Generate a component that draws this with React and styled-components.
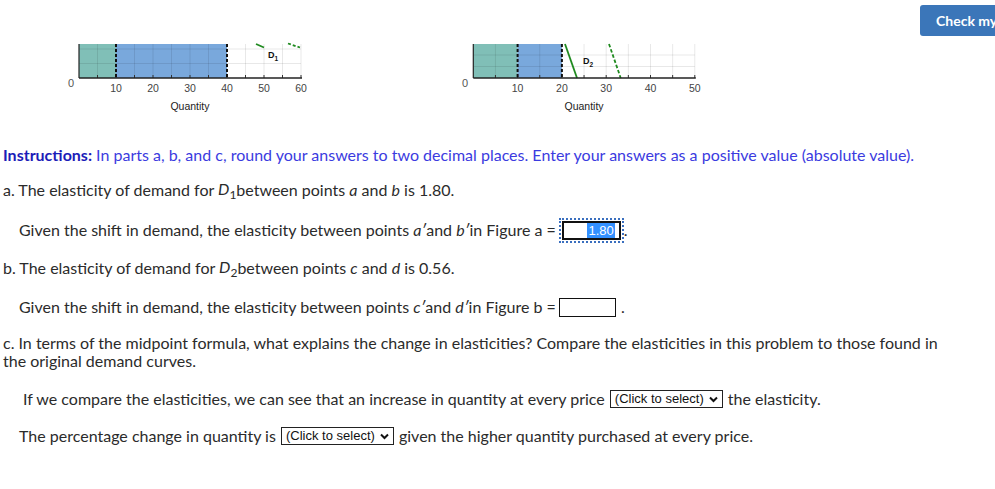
import styled, { createGlobalStyle } from "styled-components"

const GlobalStyle = createGlobalStyle`
    html, body {
        margin: 0;
        padding: 0;
        background: #ffffff;
        overflow: hidden;
    }
    body {
        font-family: Lato, "Liberation Sans", sans-serif;
        color: #2b2b2b;
    }
`

const chart1 = { x0: 19, unit: 3.7, max: 60, step: 10, hLines: [9, 23.5] }
const chart2 = { x0: 23.3, unit: 4.43, max: 50, step: 10, hLines: [15, 26.5] }

function Chart({ cfg, width, children, zeroX }) {
    const xs = []
    for (let q = 5; q <= cfg.max; q += 5) xs.push(q)
    const px = (q) => cfg.x0 + cfg.unit * q
    const end = px(cfg.max)

    return (
        <svg width={width} height="76" viewBox={`0 0 ${width} 76`}>
            <rect x={cfg.x0} y="4" width={end - cfg.x0} height="34" fill="#ffffff" />
            <rect x={px(0)} y="4" width={px(10) - px(0)} height="34" fill="#80bfb7" />
            <rect x={px(10)} y="4" width={px(cfg.max === 60 ? 40 : 20) - px(10)} height="34" fill="#79a8dc" />
            {xs.map((q) => (
                <line key={q} x1={px(q)} x2={px(q)} y1="4" y2="38" stroke="#000" strokeOpacity="0.09" strokeWidth="1" />
            ))}
            {cfg.hLines.map((y) => (
                <line key={y} x1={cfg.x0} x2={end} y1={y} y2={y} stroke="#000" strokeOpacity="0.09" strokeWidth="1" />
            ))}
            {xs.map((q) => (
                <line key={"t" + q} x1={px(q)} x2={px(q)} y1="35" y2="38" stroke="#333" strokeWidth="1" />
            ))}
            <line x1={cfg.x0} x2={cfg.x0} y1="4" y2="38" stroke="#222" strokeWidth="1.2" />
            {children(px)}
            <line x1={cfg.x0} x2={end + 1} y1="38" y2="38" stroke="#222" strokeWidth="1.5" />
            <text x={zeroX} y="47" fontSize="11" fill="#555" fontFamily="Liberation Sans, Arial, sans-serif">0</text>
            {xs.filter((q) => q % cfg.step === 0).map((q) => (
                <text key={"l" + q} x={px(q)} y="52" fontSize="10.5" fill="#444" textAnchor="middle" fontFamily="Liberation Sans, Arial, sans-serif">{q}</text>
            ))}
            <text x={(cfg.x0 + end) / 2} y="70" fontSize="10.5" fill="#222" textAnchor="middle" fontFamily="Liberation Sans, Arial, sans-serif">Quantity</text>
        </svg>
    )
}

function ChevronDown() {
    return (
        <svg width="9" height="7" viewBox="0 0 9 7">
            <path d="M1 1.5 L4.5 5 L8 1.5" fill="none" stroke="#111" strokeWidth="2" />
        </svg>
    )
}

function Dropdown() {
    return (
        <SelectBox>
            <span>(Click to select)</span>
            <ChevronDown />
        </SelectBox>
    )
}

function Sub({ letter, n }) {
    return (
        <Var>
            {letter}
            <Small>{n}</Small>
        </Var>
    )
}

export default function App() {
    return (
        <Page>
            <GlobalStyle />
            <TopBar>
                <CheckButton type="button">Check my work</CheckButton>
            </TopBar>

            <Figures>
                <Chart cfg={chart1} width={260} zeroX={8}>
                    {(px) => (
                        <>
                            <line x1={px(10)} x2={px(10)} y1="4" y2="38" stroke="#111" strokeWidth="2" strokeDasharray="3 2" />
                            <line x1={px(40)} x2={px(40)} y1="4" y2="38" stroke="#111" strokeWidth="2" strokeDasharray="3 2" />
                            <line x1="196" y1="4" x2="204" y2="7.5" stroke="#1f8a1f" strokeWidth="1.8" />
                            <line x1="228" y1="3.5" x2="240" y2="7.5" stroke="#1f8a1f" strokeWidth="1.8" strokeDasharray="3 2" />
                            <text x="208" y="18" fontSize="9" fontWeight="bold" fill="#111" fontFamily="Liberation Sans, Arial, sans-serif">D</text>
                            <text x="214.5" y="21" fontSize="6.5" fontWeight="bold" fill="#111" fontFamily="Liberation Sans, Arial, sans-serif">1</text>
                        </>
                    )}
                </Chart>
                <Chart cfg={chart2} width={270} zeroX={12}>
                    {(px) => (
                        <>
                            <line x1={px(10)} x2={px(10)} y1="4" y2="38" stroke="#111" strokeWidth="2" strokeDasharray="3 2" />
                            <line x1={px(20)} x2={px(20)} y1="4" y2="38" stroke="#111" strokeWidth="2" strokeDasharray="3 2" />
                            <line x1="115" y1="4" x2="127" y2="38" stroke="#1f8a1f" strokeWidth="1.8" />
                            <line x1="159" y1="4" x2="170.7" y2="38" stroke="#1f8a1f" strokeWidth="1.8" strokeDasharray="3.5 2" />
                            <text x="133" y="24" fontSize="9" fontWeight="bold" fill="#111" fontFamily="Liberation Sans, Arial, sans-serif">D</text>
                            <text x="139.5" y="27" fontSize="6.5" fontWeight="bold" fill="#111" fontFamily="Liberation Sans, Arial, sans-serif">2</text>
                        </>
                    )}
                </Chart>
            </Figures>

            <Questions>
                <Instructions>
                    <strong>Instructions:</strong> In parts a, b, and c, round your answers to two decimal places. Enter your answers as a positive value (absolute value).
                </Instructions>

                <Line gap={15}>
                    a. The elasticity of demand for <Sub letter="D" n="1" />between points <Var>a</Var> and <Var>b</Var> is 1.80.
                </Line>

                <Line gap={20} indent={16}>
                    Given the shift in demand, the elasticity between points <Var>a′</Var>and <Var>b′</Var>in Figure a =
                    <Focus>
                        <AnswerBox thick>
                            <Selected>1.80</Selected>
                        </AnswerBox>
                    </Focus>
                    .
                </Line>

                <Line gap={18}>
                    b. The elasticity of demand for <Sub letter="D" n="2" />between points <Var>c</Var> and <Var>d</Var> is 0.56.
                </Line>

                <Line gap={19} indent={16}>
                    Given the shift in demand, the elasticity between points <Var>c′</Var>and <Var>d′</Var>in Figure b =
                    <AnswerBox />
                    <Dot>.</Dot>
                </Line>

                <Wrapped gap={17}>
                    c. In terms of the midpoint formula, what explains the change in elasticities? Compare the elasticities in this problem to those found in the original demand curves.
                </Wrapped>

                <Line gap={19} indent={20}>
                    If we compare the elasticities, we can see that an increase in quantity at every price <Dropdown /> the elasticity.
                </Line>

                <Line gap={17} indent={16}>
                    The percentage change in quantity is <Dropdown /> given the higher quantity purchased at every price.
                </Line>
            </Questions>
        </Page>
    )
}

const Page = styled.div`
    width: 995px;
    height: 489px;
    overflow: hidden;
`

const TopBar = styled.div`
    height: 40px;
    display: flex;
    align-items: flex-start;
    padding-left: 920px;
    padding-top: 5px;
    box-sizing: border-box;
`

const CheckButton = styled.button`
    flex-shrink: 0;
    height: 31px;
    padding: 0 16px;
    border: none;
    border-radius: 3px;
    background: #3b76b9;
    color: #ffffff;
    font-family: Lato, "Liberation Sans", sans-serif;
    font-weight: 700;
    font-size: 14px;
    white-space: nowrap;
`

const Figures = styled.div`
    display: flex;
    padding-left: 60px;
    gap: 130px;
    height: 76px;
`

const Questions = styled.div`
    padding: 29px 0 0 3px;
    font-size: 16px;
`

const Instructions = styled.div`
    height: 20px;
    line-height: 20px;
    color: #3b3be0;
    white-space: nowrap;
    strong {
        color: #1c1cb8;
        font-weight: 700;
    }
`

const Line = styled.div`
    margin-top: ${({ gap }) => gap}px;
    padding-left: ${({ indent }) => indent || 0}px;
    height: 20px;
    line-height: 20px;
    display: flex;
    align-items: center;
    white-space: pre;
`

const Wrapped = styled.div`
    margin-top: ${({ gap }) => gap}px;
    line-height: 18px;
    width: 945px;
`

const Var = styled.i`
    font-style: italic;
`

const Small = styled.span`
    font-style: normal;
    font-size: 12px;
    position: relative;
    top: 4px;
`

const Focus = styled.span`
    display: inline-flex;
    margin-left: 3px;
    padding: 1px;
    border: 2px dotted #3a6fbf;
`

const AnswerBox = styled.span`
    display: inline-flex;
    justify-content: flex-end;
    align-items: center;
    box-sizing: border-box;
    width: ${({ thick }) => (thick ? 59 : 57)}px;
    height: 19px;
    margin-left: ${({ thick }) => (thick ? 0 : 3)}px;
    padding-right: 4px;
    border: ${({ thick }) => (thick ? 2 : 1)}px solid #111;
    background: #ffffff;
`

const Selected = styled.span`
    background: #3390ff;
    color: #ffffff;
    font-family: "Liberation Sans", Arial, sans-serif;
    font-size: 13px;
    line-height: 15px;
    padding: 0 1px;
`

const Dot = styled.span`
    margin-left: 5px;
`

const SelectBox = styled.span`
    display: inline-flex;
    align-items: center;
    gap: 5px;
    box-sizing: border-box;
    height: 18px;
    padding: 0 4px 0 4px;
    margin: 0 1px;
    border: 1px solid #222;
    font-family: "Liberation Sans", Arial, sans-serif;
    font-size: 13px;
    color: #111;
`
